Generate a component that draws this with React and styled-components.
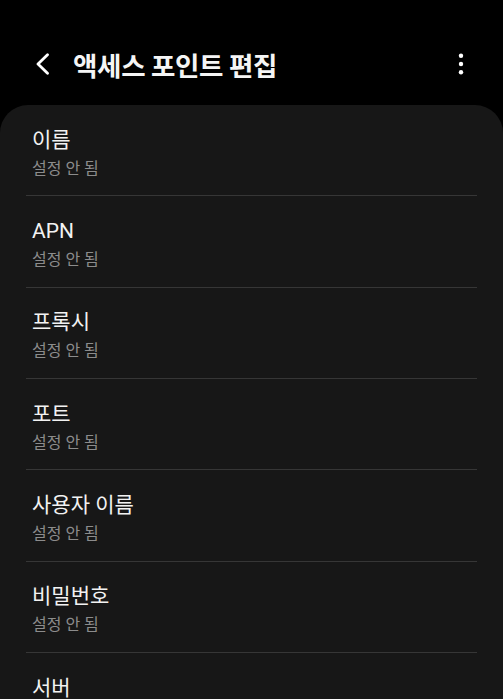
import React from "react";
import styled, { createGlobalStyle } from "styled-components";

const GlobalStyle = createGlobalStyle`
  html, body {
    margin: 0;
    padding: 0;
    background: #000;
  }

  body {
    font-family: "Roboto", "Noto Sans CJK KR", sans-serif;
    -webkit-font-smoothing: antialiased;
  }
`;

const Screen = styled.div`
  width: 503px;
  height: 699px;
  overflow: hidden;
  background: #000;
  display: flex;
  flex-direction: column;
`;

const TopBar = styled.header`
  flex-shrink: 0;
  display: flex;
  align-items: center;
  height: 48px;
  margin-top: 40px;
  margin-bottom: 17px;
  padding: 0 36px 0 33px;

  h1 {
    margin: 0 0 0 22px;
    color: #f5f5f5;
    font-family: "Noto Sans CJK KR", sans-serif;
    font-size: 26.5px;
    font-weight: 700;
    letter-spacing: -0.3px;
  }

  .right {
    margin-left: auto;
  }
`;

const IconButton = styled.button`
  display: flex;
  align-items: center;
  justify-content: center;
  width: ${(p) => p.size}px;
  height: 40px;
  padding: 0;
  border: none;
  background: none;
  color: #fff;
`;

const Card = styled.section`
  flex-shrink: 0;
  background: #171717;
  border-radius: 28px 28px 0 0;
  padding: 0 26px;
`;

const Row = styled.div`
  box-sizing: border-box;
  display: flex;
  flex-direction: column;
  justify-content: center;
  height: 91.33px;
  border-bottom: 1px solid ${(p) => (p.last ? "transparent" : "#363636")};
  padding: 5px 0 0 6px;
`;

const Title = styled.div`
  color: #f2f2f2;
  font-size: 21px;
  line-height: 28px;
`;

const Summary = styled.div`
  margin-top: 4px;
  color: #8c8c8c;
  font-size: 16px;
  line-height: 22px;
`;

const items = [
  "이름",
  "APN",
  "프록시",
  "포트",
  "사용자 이름",
  "비밀번호",
  "서버",
];

function App() {
  return (
    <Screen>
      <GlobalStyle />
      <TopBar>
        <IconButton size={18} aria-label="뒤로">
          <svg width="16" height="22" viewBox="0 0 16 22" fill="none">
            <path
              d="M13.5 1.8 L4 11 L13.5 20.2"
              stroke="#fff"
              strokeWidth="2.8"
              strokeLinecap="round"
              strokeLinejoin="round"
            />
          </svg>
        </IconButton>
        <h1>액세스 포인트 편집</h1>
        <div className="right">
          <IconButton size={12} aria-label="더보기">
            <svg width="6" height="22" viewBox="0 0 6 22">
              <circle cx="3" cy="2.7" r="2.2" fill="#fff" />
              <circle cx="3" cy="11" r="2.2" fill="#fff" />
              <circle cx="3" cy="19.3" r="2.2" fill="#fff" />
            </svg>
          </IconButton>
        </div>
      </TopBar>

      <Card>
        {items.map((name, i) => (
          <Row key={name} last={i === items.length - 1}>
            <Title>{name}</Title>
            <Summary>설정 안 됨</Summary>
          </Row>
        ))}
      </Card>
    </Screen>
  );
}

export default App;
